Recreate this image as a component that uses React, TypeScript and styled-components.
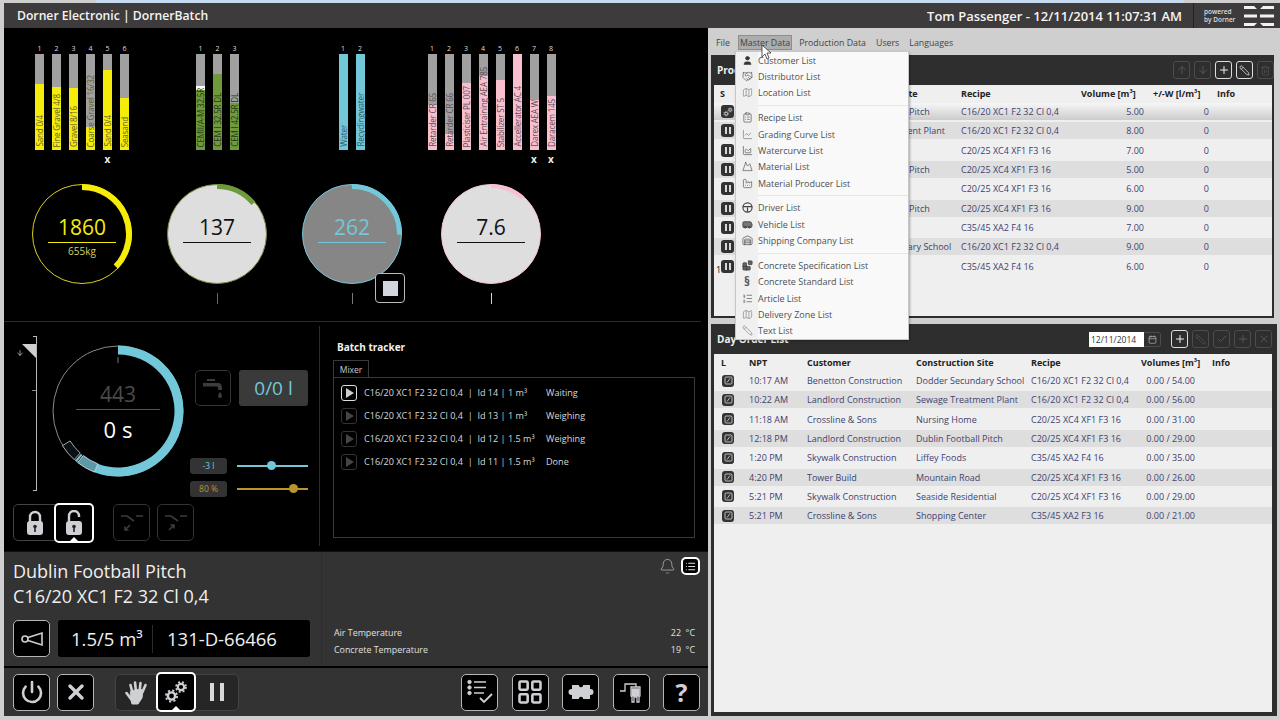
import React from "react";
import styled, { createGlobalStyle } from "styled-components";
import {
  ArrowDown,
  ArrowUp,
  AreaChart,
  Bell,
  Bus,
  Calendar,
  Check,
  ClipboardList,
  Factory,
  Handshake,
  LayoutGrid,
  LineChart,
  List,
  ListOrdered,
  Map as MapIcon,
  Mountain,
  Pencil,
  Plus,
  Power,
  Trash2,
  User,
  Warehouse,
  X,
  Blocks,
} from "lucide-react";

const GlobalStyle = createGlobalStyle`
  html, body { margin: 0; padding: 0; background: #cfcfcf; overflow: hidden; }
  body { font-family: "Open Sans", "Liberation Sans", sans-serif; }
  * { box-sizing: border-box; }
`;

const YELLOW = "#f5ec0a";
const GREEN = "#6f9a3c";
const BLUE = "#72c7d9";
const PINK = "#f8c0cf";

const Shell = styled.div`
  position: relative;
  width: 1280px;
  height: 720px;
  background: #cfcfcf;
  overflow: hidden;
  display: flex;
  flex-direction: column;
`;

const TopStrip = styled.div`
  height: 3px;
  margin-left: 96px;
  width: 1088px;
  background: #c6daf0;
`;

const TitleBar = styled.div`
  height: 25px;
  margin-left: 4px;
  background: #3d3b3b;
  display: flex;
  align-items: center;
  padding-left: 13px;
  padding-right: 6px;
  color: #f4f4f4;
  font-size: 13px;
  font-weight: 600;
`;

const Title = styled.div`
  flex: 1;
  font-size: 12.2px;
`;

const Powered = styled.div`
  height: 25px;
  margin-left: 11px;
  padding: 5px 0 0 10px;
  width: 51px;
  border-left: 1px solid #222;
  font-size: 6.5px;
  line-height: 8px;
  font-weight: 600;
  color: #ddd;
`;

const Main = styled.div`
  display: flex;
  height: 688px;
`;

const LeftCol = styled.div`
  width: 704px;
  margin-left: 4px;
  background: #000;
  display: flex;
  flex-direction: column;
`;

const TopSection = styled.div`
  height: 294px;
  padding-top: 17px;
  margin-right: 7px;
  border-bottom: 1px solid #2c2c2c;
`;

const SilosRow = styled.div`
  display: flex;
  padding-left: 27px;
`;

const SiloGroup = styled.div<{ $gap: number }>`
  display: flex;
  margin-left: ${(p) => p.$gap}px;
`;

const SiloCol = styled.div`
  width: 17px;
  display: flex;
  flex-direction: column;
  align-items: center;
`;

const SiloNum = styled.div`
  height: 9px;
  font-size: 7px;
  line-height: 8px;
  color: #ddd;
`;

const SiloBar = styled.div`
  position: relative;
  width: 9px;
  height: 96px;
  background: #a0a0a0;
  display: flex;
  flex-direction: column;
  justify-content: flex-end;
`;

const SiloFill = styled.div<{ $color: string; $cap?: boolean }>`
  background: ${(p) => p.$color};
  border-top: ${(p) => (p.$cap ? "4px solid #fff" : "0")};
`;

const SiloLabel = styled.div<{ $color: string }>`
  position: absolute;
  left: 0;
  bottom: 3px;
  width: 9px;
  writing-mode: vertical-rl;
  transform: rotate(180deg);
  white-space: nowrap;
  font-size: 8.1px;
  line-height: 9px;
  letter-spacing: -0.2px;
  color: ${(p) => p.$color};
`;

const SiloMark = styled.div`
  height: 19px;
  font-size: 10px;
  font-weight: 700;
  line-height: 19px;
  color: #eee;
`;

const GaugeRow = styled.div`
  display: flex;
  margin-top: 15px;
  padding-left: 28px;
`;

const GaugeWrap = styled.div<{ $gap: number }>`
  width: 100px;
  margin-left: ${(p) => p.$gap}px;
  display: flex;
  flex-direction: column;
  align-items: center;
`;

const Dial = styled.div`
  position: relative;
  width: 100px;
  height: 100px;
  display: flex;
  flex-direction: column;
  align-items: center;
  padding-top: 30px;
`;

const DialArt = styled.svg`
  position: absolute;
  inset: 0;
`;

const DialValue = styled.div<{ $color: string }>`
  position: relative;
  width: 68px;
  height: 29px;
  text-align: center;
  font-size: 21px;
  line-height: 27px;
  color: ${(p) => p.$color};
  border-bottom: 1px solid ${(p) => p.$color};
`;

const DialSub = styled.div<{ $color: string }>`
  position: relative;
  font-size: 10px;
  line-height: 14px;
  margin-top: 1px;
  color: ${(p) => p.$color};
`;

const GaugeTick = styled.div<{ $color?: string }>`
  width: 1px;
  height: 11px;
  margin-top: 9px;
  background: ${(p) => p.$color || "transparent"};
`;

const StopBadge = styled.div`
  position: absolute;
  left: 73px;
  top: 89px;
  width: 30px;
  height: 30px;
  border: 1px solid #bbb;
  border-radius: 4px;
  background: #000;
  display: flex;
  align-items: center;
  justify-content: center;
  &::after {
    content: "";
    width: 15px;
    height: 15px;
    background: #d3d6de;
  }
`;

const LowerSection = styled.div`
  height: 229px;
  display: flex;
`;

const LowerLeft = styled.div`
  width: 315px;
  display: flex;
  flex-direction: column;
`;

const VDivider = styled.div`
  width: 1px;
  margin: 4px 0 5px;
  background: #2c2c2c;
`;

const ControlsTop = styled.div`
  height: 168px;
  margin-top: 14px;
  display: flex;
`;

const Scale = styled.div`
  position: relative;
  width: 18px;
  height: 155px;
  margin-left: 15px;
  border-right: 1.5px solid #b8b8b8;
  &::before,
  &::after {
    content: "";
    position: absolute;
    right: 0;
    width: 3px;
    height: 1px;
    background: #b8b8b8;
    top: 0;
  }
  &::after {
    top: auto;
    bottom: 0;
  }
`;

const ScaleMid = styled.div`
  position: absolute;
  right: 0;
  top: 54px;
  width: 4px;
  height: 1px;
  background: #888;
`;

const ScaleMark = styled.div`
  position: absolute;
  right: 0;
  top: 8px;
  width: 0;
  height: 0;
  border-top: 14px solid #cfcfcf;
  border-left: 14px solid transparent;
`;

const ScaleArrow = styled.div`
  position: absolute;
  left: -3px;
  top: 13px;
  color: #ddd;
  display: flex;
`;

const Ring = styled.div`
  position: relative;
  width: 132px;
  height: 132px;
  margin: 9px 0 0 15px;
  display: flex;
  flex-direction: column;
  align-items: center;
  padding-top: 36px;
`;

const RingTop = styled.div`
  position: relative;
  width: 84px;
  height: 29px;
  text-align: center;
  font-size: 21px;
  line-height: 26px;
  color: #4a4a4a;
  border-bottom: 1px solid #555;
`;

const RingBottom = styled.div`
  position: relative;
  font-size: 22px;
  line-height: 38px;
  color: #fff;
`;

const SideControls = styled.div`
  width: 118px;
  margin: 34px 0 0 6px;
  display: flex;
  flex-direction: column;
`;

const TapRow = styled.div`
  display: flex;
  gap: 8px;
  margin-left: 5px;
  margin-bottom: 52px;
`;

const TapValue = styled.div`
  width: 69px;
  height: 36px;
  border-radius: 3px;
  background: #3a3a3a;
  color: ${BLUE};
  font-size: 19px;
  line-height: 36px;
  text-align: center;
`;

const SliderRow = styled.div`
  display: flex;
  align-items: center;
  gap: 10px;
  height: 16px;
  margin-bottom: 7px;
`;

const SliderBox = styled.div<{ $color: string }>`
  width: 37px;
  height: 16px;
  border-radius: 3px;
  background: #333;
  color: ${(p) => p.$color};
  font-size: 8.5px;
  line-height: 16px;
  text-align: center;
`;

const Track = styled.div<{ $color: string }>`
  position: relative;
  width: 71px;
  height: 1.5px;
  background: ${(p) => p.$color};
`;

const TrackFill = styled.div<{ $color: string }>`
  height: 2.5px;
  margin-top: -0.5px;
  background: ${(p) => p.$color};
`;

const Thumb = styled.div<{ $color: string }>`
  position: absolute;
  top: -4px;
  width: 9px;
  height: 9px;
  margin-left: -4.5px;
  border-radius: 50%;
  background: ${(p) => p.$color};
`;

const ControlsBottom = styled.div`
  display: flex;
  padding-left: 9px;
  gap: 7px;
`;

const IconButton = styled.div<{ $w?: number; $h?: number; $dim?: boolean; $ml?: number }>`
  position: relative;
  width: ${(p) => p.$w || 37}px;
  height: ${(p) => p.$h || 37}px;
  margin-left: ${(p) => p.$ml || 0}px;
  flex: none;
  display: flex;
  align-items: center;
  justify-content: center;
  border: 1px solid ${(p) => (p.$dim ? "#333" : "#b5b5b5")};
  border-radius: 5px;
  background: #000;
  color: ${(p) => (p.$dim ? "#3c3c3c" : "#cfd0d4")};
`;

const ButtonGroup = styled.div<{ $gap?: number; $bg?: string }>`
  display: flex;
  margin-left: ${(p) => p.$gap || 0}px;
  border: 1px solid #444;
  border-radius: 5px;
  background: ${(p) => p.$bg || "#000"};
  height: 37px;
  align-items: center;
`;

const GroupItem = styled.div<{ $selected?: boolean; $w: number }>`
  position: relative;
  width: ${(p) => p.$w}px;
  height: ${(p) => (p.$selected ? 40 : 35)}px;
  margin: ${(p) => (p.$selected ? "0 -1px" : "0")};
  z-index: ${(p) => (p.$selected ? 1 : 0)};
  display: flex;
  align-items: center;
  justify-content: center;
  color: #cfd0d4;
  border: ${(p) => (p.$selected ? "2px solid #fff" : "0")};
  border-radius: 5px;
  background: ${(p) => (p.$selected ? "#000" : "transparent")};
  &::after {
    content: "";
    display: ${(p) => (p.$selected ? "block" : "none")};
    position: absolute;
    bottom: 0;
    left: 50%;
    margin-left: -4px;
    border-bottom: 4px solid #fff;
    border-left: 4px solid transparent;
    border-right: 4px solid transparent;
  }
`;

const Tracker = styled.div`
  flex: 1;
  padding: 18px 0 0 13px;
  color: #ddd;
`;

const TrackerTitle = styled.div`
  font-size: 10px;
  line-height: 14px;
  font-weight: 700;
  color: #f0f0f0;
  margin-left: 4px;
`;

const Tab = styled.div`
  width: 36px;
  height: 17px;
  margin-top: 6px;
  border: 1px solid #3a3a3a;
  border-bottom: 0;
  font-size: 8.5px;
  line-height: 17px;
  text-align: center;
  color: #ccc;
`;

const TrackerBox = styled.div`
  width: 362px;
  height: 161px;
  border: 1px solid #3a3a3a;
  padding-top: 3px;
`;

const TrackerRow = styled.div`
  display: grid;
  grid-template-columns: 205px 1fr;
  height: 23px;
  align-items: center;
  padding-left: 7px;
  font-size: 9.1px;
  color: #d8d8d8;
  white-space: nowrap;
`;

const TrackerName = styled.div`
  display: flex;
  align-items: center;
  gap: 7px;
`;

const PlayBox = styled.div<{ $on?: boolean }>`
  width: 16px;
  height: 16px;
  flex: none;
  border: 1px solid ${(p) => (p.$on ? "#ddd" : "#333")};
  border-radius: 3px;
  display: flex;
  align-items: center;
  justify-content: center;
  &::after {
    content: "";
    margin-left: 2px;
    border-left: 8px solid ${(p) => (p.$on ? "#ccc" : "#444")};
    border-top: 5px solid transparent;
    border-bottom: 5px solid transparent;
  }
`;

const InfoPanel = styled.div`
  height: 115px;
  display: flex;
  background: #333;
  border-top: 1px solid #111;
`;

const InfoLeft = styled.div`
  width: 318px;
  padding: 7px 0 0 9px;
  border-right: 1px solid #2d2d2d;
  color: #efefef;
`;

const InfoLine = styled.div`
  font-size: 18px;
  line-height: 25px;
  white-space: nowrap;
`;

const TruckRow = styled.div`
  display: flex;
  gap: 8px;
  margin-top: 11px;
`;

const TruckBox = styled.div`
  width: 252px;
  height: 37px;
  display: flex;
  align-items: center;
  border-radius: 3px;
  background: #000;
  color: #f0f0f0;
  font-size: 18.5px;
`;

const TruckVolume = styled.div`
  width: 95px;
  padding-left: 13px;
  line-height: 28px;
  border-right: 1px solid #2c2c2c;
`;

const TruckPlate = styled.div`
  padding-left: 14px;
`;

const InfoRight = styled.div`
  flex: 1;
  display: flex;
  flex-direction: column;
  padding: 4px 8px 0 12px;
`;

const AlertRow = styled.div`
  display: flex;
  justify-content: flex-end;
  align-items: center;
  gap: 5px;
  height: 20px;
  margin-bottom: 48px;
  color: #aaa;
`;

const AlertButton = styled.div`
  width: 19px;
  height: 18px;
  border: 2px solid #fff;
  border-radius: 5px;
  background: #000;
  color: #ddd;
  display: flex;
  align-items: center;
  justify-content: center;
`;

const TempRow = styled.div`
  display: flex;
  justify-content: space-between;
  height: 17px;
  font-size: 8.9px;
  line-height: 17px;
  color: #e0e0e0;
  padding-right: 5px;
`;

const BlackLine = styled.div`
  height: 2px;
  background: #000;
`;

const Toolbar = styled.div`
  height: 48px;
  background: #333;
  display: flex;
  align-items: center;
  padding: 0 8px 0 9px;
  gap: 7px;
`;

const ToolbarSpacer = styled.div`
  flex: 1;
`;

const ToolbarRight = styled.div`
  display: flex;
  gap: 13.5px;
`;

const QuestionMark = styled.span`
  font-size: 25px;
  font-weight: 700;
  line-height: 1;
`;

const RightCol = styled.div`
  flex: 1;
  display: flex;
  flex-direction: column;
  padding-left: 3px;
`;

const MenuBar = styled.div`
  height: 27px;
  display: flex;
  align-items: center;
  padding: 1px 0 0 3px;
  font-size: 8.8px;
  color: #444;
`;

const MenuItem = styled.div<{ $active?: boolean; $ml?: number }>`
  height: 15px;
  line-height: 14px;
  padding: 0 1px;
  margin-left: ${(p) => p.$ml || 0}px;
  background: ${(p) => (p.$active ? "#adadad" : "transparent")};
  border: 1px solid ${(p) => (p.$active ? "#8d8d8d" : "transparent")};
`;

const Panel = styled.div<{ $h: number; $w: number }>`
  height: ${(p) => p.$h}px;
  width: ${(p) => p.$w}px;
  background: #2e2e2e;
  padding: 0 0 0 3px;
  display: flex;
  flex-direction: column;
`;

const PanelGap = styled.div`
  height: 6px;
`;

const PanelHead = styled.div`
  height: 30px;
  display: flex;
  align-items: center;
  padding-left: 3px;
  color: #f0f0f0;
  font-size: 10px;
  font-weight: 700;
`;

const HeadTitle = styled.div`
  flex: 1;
`;

const HeadTools = styled.div<{ $mr?: number }>`
  display: flex;
  align-items: center;
  gap: 4px;
  margin-right: ${(p) => p.$mr || 0}px;
`;

const HeadButton = styled.div<{ $on?: boolean }>`
  width: 17px;
  height: 18px;
  flex: none;
  border: 1px solid ${(p) => (p.$on ? "#ddd" : "#4c4c4c")};
  border-radius: 3px;
  display: flex;
  align-items: center;
  justify-content: center;
  color: ${(p) => (p.$on ? "#f2f2f2" : "#555")};
`;

const SlantPencil = styled(Pencil)`
  transform: scaleX(-1);
`;

const DateField = styled.div`
  width: 55px;
  height: 15px;
  background: #fff;
  color: #333;
  font-size: 8.5px;
  font-weight: 400;
  line-height: 15px;
  padding-left: 2px;
`;

const CalendarBox = styled.div`
  width: 17px;
  height: 15px;
  margin-left: -4px;
  margin-right: 6px;
  border: 1px solid #4c4c4c;
  border-left: 0;
  border-radius: 0 3px 3px 0;
  display: flex;
  align-items: center;
  justify-content: center;
  color: #aaa;
`;

const TableArea = styled.div<{ $h: number }>`
  width: 558px;
  height: ${(p) => p.$h}px;
  background: #efefef;
`;

const Row = styled.div<{ $cols: string; $stripe?: boolean; $selected?: boolean }>`
  display: grid;
  grid-template-columns: ${(p) => p.$cols};
  align-items: center;
  height: 17px;
  margin-bottom: 2.33px;
  font-size: 9px;
  white-space: nowrap;
  color: #3d4270;
  background: ${(p) =>
    p.$selected
      ? "linear-gradient(#f6f6f6, #cccccc)"
      : p.$stripe
      ? "#dedede"
      : "transparent"};
`;

const HeaderRow = styled.div<{ $cols: string }>`
  display: grid;
  grid-template-columns: ${(p) => p.$cols};
  align-items: center;
  height: 18px;
  padding-bottom: 2px;
  font-size: 9px;
  font-weight: 700;
  white-space: nowrap;
  color: #222;
`;

const Cell = styled.div<{ $right?: boolean; $pad?: number }>`
  position: relative;
  text-align: ${(p) => (p.$right ? "right" : "left")};
  padding-left: ${(p) => p.$pad || 0}px;
  overflow: hidden;
`;

const VolumeCell = styled(Cell)`
  margin: 0 17px 0 -10px;
`;

const StatusCell = styled.div<{ $pad: number }>`
  position: relative;
  padding-left: ${(p) => p.$pad}px;
  display: flex;
`;

const Peek = styled.div`
  position: absolute;
  left: 2px;
  top: 3px;
  font-size: 9px;
  color: #111;
`;

const StatusBox = styled.div<{ $size: number }>`
  width: ${(p) => p.$size}px;
  height: ${(p) => p.$size}px;
  border-radius: 3px;
  background: #333;
  display: flex;
  align-items: center;
  justify-content: center;
  color: #ccc;
`;

const PauseBars = styled.div<{ $big?: boolean }>`
  width: ${(p) => (p.$big ? 14 : 6)}px;
  height: ${(p) => (p.$big ? 18 : 7)}px;
  border-left: ${(p) => (p.$big ? 4 : 2)}px solid #d8d8d8;
  border-right: ${(p) => (p.$big ? 4 : 2)}px solid #d8d8d8;
`;

const MenuPopup = styled.div`
  position: absolute;
  left: 736px;
  top: 52px;
  width: 172px;
  height: 287px;
  background: linear-gradient(90deg, #f0f0f0 22px, #f9f9f9 22px);
  box-shadow: 0 0 0 1px #c8c8c8, 1px 1px 3px rgba(0, 0, 0, 0.55);
  font-size: 9px;
  color: #4e4e4e;
`;

const PopupItem = styled.div`
  display: flex;
  align-items: center;
  height: 16.4px;
  color: #505050;
`;

const PopupIcon = styled.div`
  width: 22px;
  flex: none;
  display: flex;
  justify-content: center;
  font-size: 12px;
  font-weight: 700;
  color: #555;
`;

const PopupSep = styled.div`
  height: 8.3px;
  margin-left: 22px;
  display: flex;
  align-items: center;
  &::after {
    content: "";
    flex: 1;
    height: 1px;
    background: #e6e6e6;
  }
`;

const Cursor = styled.svg`
  position: absolute;
  left: 761px;
  top: 44px;
`;

const polar = (cx: number, cy: number, r: number, a: number) => {
  const t = ((a - 90) * Math.PI) / 180;
  return `${(cx + r * Math.cos(t)).toFixed(2)} ${(cy + r * Math.sin(t)).toFixed(2)}`;
};

const arc = (cx: number, cy: number, r: number, from: number, to: number) =>
  `M ${polar(cx, cy, r, from)} A ${r} ${r} 0 ${to - from > 180 ? 1 : 0} 1 ${polar(cx, cy, r, to)}`;

// closed ring segment, used for the bordered parts of the mixer ring
const band = (cx: number, cy: number, r1: number, r2: number, from: number, to: number) =>
  `M ${polar(cx, cy, r2, from)} A ${r2} ${r2} 0 0 1 ${polar(cx, cy, r2, to)} L ${polar(cx, cy, r1, to)} A ${r1} ${r1} 0 0 0 ${polar(cx, cy, r1, from)} Z`;

const silos = [
  {
    gap: 0,
    color: YELLOW,
    text: "#5f5f28",
    items: [
      { n: "Sand 0/4", f: 69 },
      { n: "Fine Gravel 4/8", f: 66 },
      { n: "Gravel 8/16", f: 65 },
      { n: "Coarse Gravel 16/32", f: 24 },
      { n: "Sand 0/4", f: 83, x: true },
      { n: "Seasand", f: 54 },
    ],
  },
  {
    gap: 59,
    color: GREEN,
    text: "#24331a",
    items: [
      { n: "CEMII/A-M 32.5R", f: 67, cap: true },
      { n: "CEM I 32.5R DL", f: 79 },
      { n: "CEM I 42.5R DL", f: 49 },
    ],
  },
  {
    gap: 91.5,
    color: BLUE,
    text: "#2e5a6a",
    items: [
      { n: "Water", f: 100 },
      { n: "Recyclingwater", f: 100 },
    ],
  },
  {
    gap: 55,
    color: PINK,
    text: "#5b4a50",
    items: [
      { n: "Retarder CR 65", f: 47 },
      { n: "Retarder CR 66", f: 17 },
      { n: "Plasticiser PL 007", f: 70 },
      { n: "Air Entraining AEA 785", f: 77 },
      { n: "Stabilizer ST 5", f: 73 },
      { n: "Accellerator AC 4", f: 100 },
      { n: "Darex AEA W", f: 52, x: true },
      { n: "Daracem 145", f: 56, x: true },
    ],
  },
];

type GaugeProps = {
  gap: number;
  value: string;
  sub?: string;
  color: string;
  subColor?: string;
  arcColor: string;
  border: string;
  bg: string;
  to: number;
  width: number;
  tick?: string;
  badge?: boolean;
};

const Gauge = (p: GaugeProps) => {
  return (
    <GaugeWrap $gap={p.gap}>
      <Dial>
        <DialArt width="100" height="100" viewBox="0 0 100 100">
          <circle cx="50" cy="50" r="49.5" fill={p.bg} stroke={p.border} strokeWidth="1" />
          <path d={arc(50, 50, 50 - p.width / 2, 0, p.to)} fill="none" stroke={p.arcColor} strokeWidth={p.width} />
        </DialArt>
        <DialValue $color={p.color}>{p.value}</DialValue>
        {p.sub && <DialSub $color={p.subColor || p.color}>{p.sub}</DialSub>}
        {p.badge && <StopBadge />}
      </Dial>
      <GaugeTick $color={p.tick} />
    </GaugeWrap>
  );
};

const Gears = ({ size = 24 }: { size?: number }) => (
  <svg width={size} height={size} viewBox="0 0 24 24" fill="none" stroke="#cfd0d4">
    <circle cx="7.5" cy="16" r="3.6" strokeWidth="2.4" />
    <circle cx="7.5" cy="16" r="5.6" strokeWidth="1.8" strokeDasharray="2.2 2.2" />
    <circle cx="17" cy="7" r="3.2" strokeWidth="2.2" />
    <circle cx="17" cy="7" r="5" strokeWidth="1.7" strokeDasharray="2 2" />
  </svg>
);

const TapIcon = () => (
  <svg width="24" height="24" viewBox="0 0 24 24" fill="#3c3c3c">
    <rect x="6" y="3" width="8" height="2" />
    <path d="M2 7h14c4 0 5 2 5 5v2h-4v-2c0-1-.5-1.5-1.5-1.5H2z" />
    <path d="M19 16c1.5 2 2 3 2 4a2 2 0 0 1-4 0c0-1 .5-2 2-4z" />
  </svg>
);

const HornIcon = () => (
  <svg width="24" height="16" viewBox="0 0 24 16" fill="none" stroke="#cfd0d4" strokeWidth="1.6">
    <circle cx="5" cy="8" r="3" />
    <path d="M8 6.500 22 2v12L8 9.500" />
  </svg>
);

const SwitchIcon = ({ up }: { up?: boolean }) => (
  <svg width="24" height="24" viewBox="0 0 24 24" fill="none" stroke="#3c3c3c" strokeWidth="1.6">
    <path d="M1 5h6l7 5M16 5h7" />
    {up ? <path d="M5 19l5-5M6.500 14H10v3.500" /> : <path d="M10 14l-5 5M5 15.500V19h3.500" />}
  </svg>
);

const PadlockIcon = ({ open }: { open?: boolean }) => (
  <svg width="18" height="26" viewBox="0 0 18 26" fill="none">
    <path
      d={open ? "M4 12V7a5 5 0 0 1 10 0v1" : "M4 12V7a5 5 0 0 1 10 0v5"}
      stroke="#cfd0d4"
      strokeWidth="2.4"
      transform={open ? "translate(0 -1)" : undefined}
    />
    <rect x="1" y="11" width="16" height="14" rx="3" fill="#cfd0d4" />
    <circle cx="9" cy="16.500" r="1.800" fill="#222" />
    <rect x="8.200" y="17" width="1.600" height="5" fill="#222" />
  </svg>
);

const HandIcon = () => (
  <svg width="24" height="28" viewBox="0 0 24 28" fill="#cfd0d4" stroke="#cfd0d4" strokeLinecap="round">
    <path d="M6 13c3-1 9-2 12-1l-1 8-4 6H7l-2-7z" />
    <path d="M7.500 15 5.500 7M11 14 10 4.500M14.500 14l1-9M17.500 14l3-7" strokeWidth="2.6" fill="none" />
    <path d="M6 21 1.500 15" strokeWidth="2.6" fill="none" />
  </svg>
);

const ChecklistIcon = () => (
  <svg width="28" height="28" viewBox="0 0 28 28" fill="#cfd0d4" stroke="#cfd0d4">
    <circle cx="3.500" cy="4" r="1.700" />
    <circle cx="3.500" cy="9.500" r="1.700" />
    <circle cx="3.500" cy="15" r="1.700" />
    <path d="M8 4h12M8 9.500h12M8 15h10" strokeWidth="1.600" fill="none" />
    <path d="M14 20l4 4 8-8" strokeWidth="1.800" fill="none" />
  </svg>
);

const PuzzleIcon = () => (
  <svg width="26" height="18" viewBox="0 0 26 18">
    <rect x="4" y="2" width="18" height="14" fill="#cfd0d4" />
    <circle cx="3.500" cy="9" r="3" fill="#cfd0d4" />
    <circle cx="22.500" cy="9" r="3" fill="#cfd0d4" />
    <circle cx="13" cy="2" r="2.200" fill="#000" />
    <circle cx="13" cy="16" r="2.200" fill="#000" />
  </svg>
);

const SiloIcon = () => (
  <svg width="24" height="24" viewBox="0 0 24 24" fill="none" stroke="#cfd0d4" strokeWidth="1.3">
    <path d="M1 11h5V4h11v3" />
    <path d="M12 7h9v9l-1 1v5h-2v-5h-3v5h-2v-5l-1-1z" />
    <path d="M13 9h7v7h-7z" fill="#cfd0d4" />
  </svg>
);

const SteeringIcon = () => (
  <svg width="11" height="11" viewBox="0 0 12 12" fill="none" stroke="#444" strokeWidth="1.3">
    <circle cx="6" cy="6" r="5" />
    <path d="M1 5h10M6 6v5" />
  </svg>
);

const EditMark = () => (
  <svg width="9" height="9" viewBox="0 0 9 9" fill="none" stroke="#bbb" strokeWidth="1">
    <rect x="1" y="1" width="7" height="7" rx="1" />
    <path d="M3 6.500 6 2.500" />
  </svg>
);

const Logo = () => (
  <svg width="30" height="20" viewBox="0 0 30 20" fill="#f2f2f2">
    <path d="M0 0h10l3 3H0zM0 8.500h13v3H0zM0 17h13l-3 3H0z" />
    <path d="M16 3h14V0H19zM16 8.500h14v3H16zM19 20h11v-3H16z" />
  </svg>
);

const lowerCols = "35px 58px 109px 115px 110px 71px 1fr";
const upperCols = "129px 118px 120px 63px 65px 1fr";
const upperHeadCols = "126px 121px 120px 63px 65px 1fr";

const upperRows = [
  ["Dublin Football Pitch", "C16/20 XC1 F2 32 Cl 0,4", "5.00"],
  ["Sewage Treatment Plant", "C16/20 XC1 F2 32 Cl 0,4", "8.00"],
  ["Nursing Home", "C20/25 XC4 XF1 F3 16", "7.00"],
  ["Dublin Football Pitch", "C20/25 XC4 XF1 F3 16", "5.00"],
  ["Liffey Foods", "C20/25 XC4 XF1 F3 16", "6.00"],
  ["Dublin Football Pitch", "C20/25 XC4 XF1 F3 16", "9.00"],
  ["Mountain Road", "C35/45 XA2 F4 16", "7.00"],
  ["Dodder Secundary School", "C16/20 XC1 F2 32 Cl 0,4", "9.00"],
  ["Liffey Foods", "C35/45 XA2 F4 16", "6.00"],
];

const lowerRows = [
  ["10:17 AM", "Benetton Construction", "Dodder Secundary School", "C16/20 XC1 F2 32 Cl 0,4", "0.00 / 54.00"],
  ["10:22 AM", "Landlord Construction", "Sewage Treatment Plant", "C16/20 XC1 F2 32 Cl 0,4", "0.00 / 56.00"],
  ["11:18 AM", "Crossline & Sons", "Nursing Home", "C20/25 XC4 XF1 F3 16", "0.00 / 31.00"],
  ["12:18 PM", "Landlord Construction", "Dublin Football Pitch", "C20/25 XC4 XF1 F3 16", "0.00 / 29.00"],
  ["1:20 PM", "Skywalk Construction", "Liffey Foods", "C35/45 XA2 F4 16", "0.00 / 35.00"],
  ["4:20 PM", "Tower Build", "Mountain Road", "C20/25 XC4 XF1 F3 16", "0.00 / 26.00"],
  ["5:21 PM", "Skywalk Construction", "Seaside Residential", "C20/25 XC4 XF1 F3 16", "0.00 / 29.00"],
  ["5:21 PM", "Crossline & Sons", "Shopping Center", "C35/45 XA2 F3 16", "0.00 / 21.00"],
];

const trackerRows = [
  { id: "Id 14 | 1 m³", status: "Waiting", on: true },
  { id: "Id 13 | 1 m³", status: "Weighing" },
  { id: "Id 12 | 1.5 m³", status: "Weighing" },
  { id: "Id 11 | 1.5 m³", status: "Done" },
];

const pi = { size: 11, strokeWidth: 1.5 };

const popupGroups: { label: string; icon: React.ReactNode }[][] = [
  [
    { label: "Customer List", icon: <User {...pi} fill="#333" color="#333" /> },
    { label: "Distributor List", icon: <Handshake {...pi} /> },
    { label: "Location List", icon: <MapIcon {...pi} color="#888" /> },
  ],
  [
    { label: "Recipe List", icon: <ClipboardList {...pi} /> },
    { label: "Grading Curve List", icon: <LineChart {...pi} color="#777" /> },
    { label: "Watercurve List", icon: <AreaChart {...pi} /> },
    { label: "Material List", icon: <Mountain {...pi} /> },
    { label: "Material Producer List", icon: <Factory {...pi} /> },
  ],
  [
    { label: "Driver List", icon: <SteeringIcon /> },
    { label: "Vehicle List", icon: <Bus {...pi} color="#333" fill="#777" /> },
    { label: "Shipping Company List", icon: <Warehouse {...pi} color="#444" /> },
  ],
  [
    { label: "Concrete Specification List", icon: <Blocks {...pi} color="#333" fill="#666" /> },
    { label: "Concrete Standard List", icon: "§" },
    { label: "Article List", icon: <ListOrdered {...pi} /> },
    { label: "Delivery Zone List", icon: <MapIcon {...pi} color="#888" /> },
    { label: "Text List", icon: <SlantPencil {...pi} color="#888" /> },
  ],
];

const hb = { size: 12, strokeWidth: 2 };

const App = () => {
  return (
    <Shell>
      <GlobalStyle />
      <TopStrip />
      <TitleBar>
        <Title>Dorner Electronic | DornerBatch</Title>
        <div>Tom Passenger - 12/11/2014 11:07:31 AM</div>
        <Powered>
          powered
          <br />
          by Dorner
        </Powered>
        <Logo />
      </TitleBar>
      <Main>
        <LeftCol>
          <TopSection>
            <SilosRow>
              {silos.map((g, i) => (
                <SiloGroup key={i} $gap={g.gap}>
                  {g.items.map((s, j) => (
                    <SiloCol key={j}>
                      <SiloNum>{j + 1}</SiloNum>
                      <SiloBar>
                        <SiloFill $color={g.color} $cap={"cap" in s} style={{ height: `${s.f}%` }} />
                        <SiloLabel $color={g.text}>{s.n}</SiloLabel>
                      </SiloBar>
                      <SiloMark>{"x" in s ? "x" : ""}</SiloMark>
                    </SiloCol>
                  ))}
                </SiloGroup>
              ))}
            </SilosRow>
            <GaugeRow>
              <Gauge gap={0} value="1860" sub="655kg" color={YELLOW} subColor="#d8d060" arcColor={YELLOW} border="#d8d020" bg="#000" to={134} width={6} />
              <Gauge gap={35} value="137" color="#111" arcColor={GREEN} border="#6f8a40" bg="#dedede" to={50} width={5} tick="#666" />
              <Gauge gap={35} value="262" color={BLUE} arcColor={BLUE} border={BLUE} bg="#868686" to={91} width={5} tick="#777" badge />
              <Gauge gap={39} value="7.6" color="#111" arcColor={PINK} border={PINK} bg="#dedede" to={42} width={4} tick={PINK} />
            </GaugeRow>
          </TopSection>
          <LowerSection>
            <LowerLeft>
              <ControlsTop>
                <Scale>
                  <ScaleMid />
                  <ScaleMark />
                  <ScaleArrow>
                    <ArrowDown size={8} strokeWidth={2} />
                  </ScaleArrow>
                </Scale>
                <Ring>
                  <DialArt width="132" height="132" viewBox="0 0 132 132">
                    <circle cx="66" cy="66" r="65" fill="none" stroke="#8a8a8a" strokeWidth="1" />
                    <path d={arc(66, 66, 61, 0, 201)} fill="none" stroke={BLUE} strokeWidth="9" />
                    <path d={band(66, 66, 56.5, 65.5, 201, 218)} fill="#5b99a8" stroke="#dfe6e8" strokeWidth="0.8" />
                    <path d={arc(66, 66, 61, 219, 221)} fill="none" stroke={BLUE} strokeWidth="9" />
                    <path d={band(66, 66, 56.5, 65.5, 222, 238)} fill="#0a1114" stroke="#cfcfcf" strokeWidth="0.8" />
                    <path d="M66 12v6" stroke="#777" strokeWidth="1" />
                  </DialArt>
                  <RingTop>443</RingTop>
                  <RingBottom>0 s</RingBottom>
                </Ring>
                <SideControls>
                  <TapRow>
                    <IconButton $w={36} $h={36} $dim>
                      <TapIcon />
                    </IconButton>
                    <TapValue>0/0 l</TapValue>
                  </TapRow>
                  <SliderRow>
                    <SliderBox $color={BLUE}>-3 l</SliderBox>
                    <Track $color={BLUE}>
                      <Thumb $color={BLUE} style={{ left: "49%" }} />
                    </Track>
                  </SliderRow>
                  <SliderRow>
                    <SliderBox $color="#b8962a">80 %</SliderBox>
                    <Track $color="#b8962a">
                      <TrackFill $color="#b8962a" style={{ width: "79%" }} />
                      <Thumb $color="#b8962a" style={{ left: "79%" }} />
                    </Track>
                  </SliderRow>
                </SideControls>
              </ControlsTop>
              <ControlsBottom>
                <ButtonGroup>
                  <GroupItem $w={41}>
                    <PadlockIcon />
                  </GroupItem>
                  <GroupItem $w={40} $selected>
                    <PadlockIcon open />
                  </GroupItem>
                </ButtonGroup>
                <IconButton $dim $ml={12}>
                  <SwitchIcon />
                </IconButton>
                <IconButton $dim>
                  <SwitchIcon up />
                </IconButton>
              </ControlsBottom>
            </LowerLeft>
            <VDivider />
            <Tracker>
              <TrackerTitle>Batch tracker</TrackerTitle>
              <Tab>Mixer</Tab>
              <TrackerBox>
                {trackerRows.map((r, i) => (
                  <TrackerRow key={i}>
                    <TrackerName>
                      <PlayBox $on={r.on} />
                      <span>C16/20 XC1 F2 32 Cl 0,4 &nbsp;|&nbsp; {r.id}</span>
                    </TrackerName>
                    <span>{r.status}</span>
                  </TrackerRow>
                ))}
              </TrackerBox>
            </Tracker>
          </LowerSection>
          <InfoPanel>
            <InfoLeft>
              <InfoLine>Dublin Football Pitch</InfoLine>
              <InfoLine>C16/20 XC1 F2 32 Cl 0,4</InfoLine>
              <TruckRow>
                <IconButton>
                  <HornIcon />
                </IconButton>
                <TruckBox>
                  <TruckVolume>1.5/5 m³</TruckVolume>
                  <TruckPlate>131-D-66466</TruckPlate>
                </TruckBox>
              </TruckRow>
            </InfoLeft>
            <InfoRight>
              <AlertRow>
                <Bell size={17} strokeWidth={1.2} />
                <AlertButton>
                  <List size={11} strokeWidth={2.5} />
                </AlertButton>
              </AlertRow>
              <TempRow>
                <span>Air Temperature</span>
                <span>22 &nbsp;°C</span>
              </TempRow>
              <TempRow>
                <span>Concrete Temperature</span>
                <span>19 &nbsp;°C</span>
              </TempRow>
            </InfoRight>
          </InfoPanel>
          <BlackLine />
          <Toolbar>
            <IconButton>
              <Power size={24} strokeWidth={2.6} />
            </IconButton>
            <IconButton>
              <X size={24} strokeWidth={3.4} />
            </IconButton>
            <ButtonGroup $gap={14} $bg="#262626">
              <GroupItem $w={41}>
                <HandIcon />
              </GroupItem>
              <GroupItem $w={40} $selected>
                <Gears />
              </GroupItem>
              <GroupItem $w={43}>
                <PauseBars $big />
              </GroupItem>
            </ButtonGroup>
            <ToolbarSpacer />
            <ToolbarRight>
              <IconButton>
                <ChecklistIcon />
              </IconButton>
              <IconButton>
                <LayoutGrid size={28} strokeWidth={2.2} />
              </IconButton>
              <IconButton>
                <PuzzleIcon />
              </IconButton>
              <IconButton>
                <SiloIcon />
              </IconButton>
              <IconButton>
                <QuestionMark>?</QuestionMark>
              </IconButton>
            </ToolbarRight>
          </Toolbar>
        </LeftCol>
        <RightCol>
          <MenuBar>
            <MenuItem>File</MenuItem>
            <MenuItem $active $ml={6}>Master Data</MenuItem>
            <MenuItem $ml={5}>Production Data</MenuItem>
            <MenuItem $ml={6}>Users</MenuItem>
            <MenuItem $ml={6}>Languages</MenuItem>
          </MenuBar>
          <Panel $h={263} $w={563}>
            <PanelHead>
              <HeadTitle>Production List</HeadTitle>
              <HeadTools>
                <HeadButton><ArrowUp {...hb} /></HeadButton>
                <HeadButton><ArrowDown {...hb} /></HeadButton>
                <HeadButton $on><Plus {...hb} /></HeadButton>
                <HeadButton $on><SlantPencil size={11} strokeWidth={1.5} /></HeadButton>
                <HeadButton><Trash2 size={11} strokeWidth={1.5} /></HeadButton>
              </HeadTools>
            </PanelHead>
            <TableArea $h={231}>
              <HeaderRow $cols={upperHeadCols}>
                <Cell $pad={6}>S</Cell>
                <Cell>Construction Site</Cell>
                <Cell>Recipe</Cell>
                <Cell>Volume [m³]</Cell>
                <Cell $pad={9}>+/-W [l/m³]</Cell>
                <Cell $pad={8}>Info</Cell>
              </HeaderRow>
              {upperRows.map((r, i) => (
                <Row key={i} $cols={upperCols} $stripe={i % 2 === 1} $selected={i === 0}>
                  <StatusCell $pad={7}>
                    {i === 8 && <Peek>1</Peek>}
                    <StatusBox $size={13}>{i === 0 ? <Gears size={10} /> : <PauseBars />}</StatusBox>
                  </StatusCell>
                  <Cell>{r[0]}</Cell>
                  <Cell>{r[1]}</Cell>
                  <Cell $right>{r[2]}</Cell>
                  <Cell $right>0</Cell>
                  <Cell />
                </Row>
              ))}
            </TableArea>
          </Panel>
          <PanelGap />
          <Panel $h={392} $w={566}>
            <PanelHead>
              <HeadTitle>Day Order List</HeadTitle>
              <HeadTools $mr={5}>
                <DateField>12/11/2014</DateField>
                <CalendarBox>
                  <Calendar size={9} />
                </CalendarBox>
                <HeadButton $on><Plus {...hb} /></HeadButton>
                <HeadButton><SlantPencil size={11} strokeWidth={1.5} /></HeadButton>
                <HeadButton><Check {...hb} /></HeadButton>
                <HeadButton><Plus {...hb} /></HeadButton>
                <HeadButton><X {...hb} /></HeadButton>
              </HeadTools>
            </PanelHead>
            <TableArea $h={358}>
              <HeaderRow $cols={lowerCols}>
                <Cell $pad={7}>L</Cell>
                <Cell>NPT</Cell>
                <Cell>Customer</Cell>
                <Cell>Construction Site</Cell>
                <Cell>Recipe</Cell>
                <Cell>Volumes [m³]</Cell>
                <Cell>Info</Cell>
              </HeaderRow>
              {lowerRows.map((r, i) => (
                <Row key={i} $cols={lowerCols} $stripe={i % 2 === 1}>
                  <StatusCell $pad={8}>
                    <StatusBox $size={12}>
                      <EditMark />
                    </StatusBox>
                  </StatusCell>
                  <Cell>{r[0]}</Cell>
                  <Cell>{r[1]}</Cell>
                  <Cell>{r[2]}</Cell>
                  <Cell>{r[3]}</Cell>
                  <VolumeCell $right>{r[4]}</VolumeCell>
                  <Cell />
                </Row>
              ))}
            </TableArea>
          </Panel>
        </RightCol>
      </Main>
      <MenuPopup>
        {popupGroups.map((g, i) => (
          <React.Fragment key={i}>
            {i > 0 && <PopupSep />}
            {g.map((it) => (
              <PopupItem key={it.label}>
                <PopupIcon>{it.icon}</PopupIcon>
                {it.label}
              </PopupItem>
            ))}
          </React.Fragment>
        ))}
      </MenuPopup>
      <Cursor width="11" height="16" viewBox="0 0 11 16">
        <path d="M1 1v12l3-3 2 5 2-1-2-5h4z" fill="#fff" stroke="#333" strokeWidth="0.8" />
      </Cursor>
    </Shell>
  );
};

export default App;
